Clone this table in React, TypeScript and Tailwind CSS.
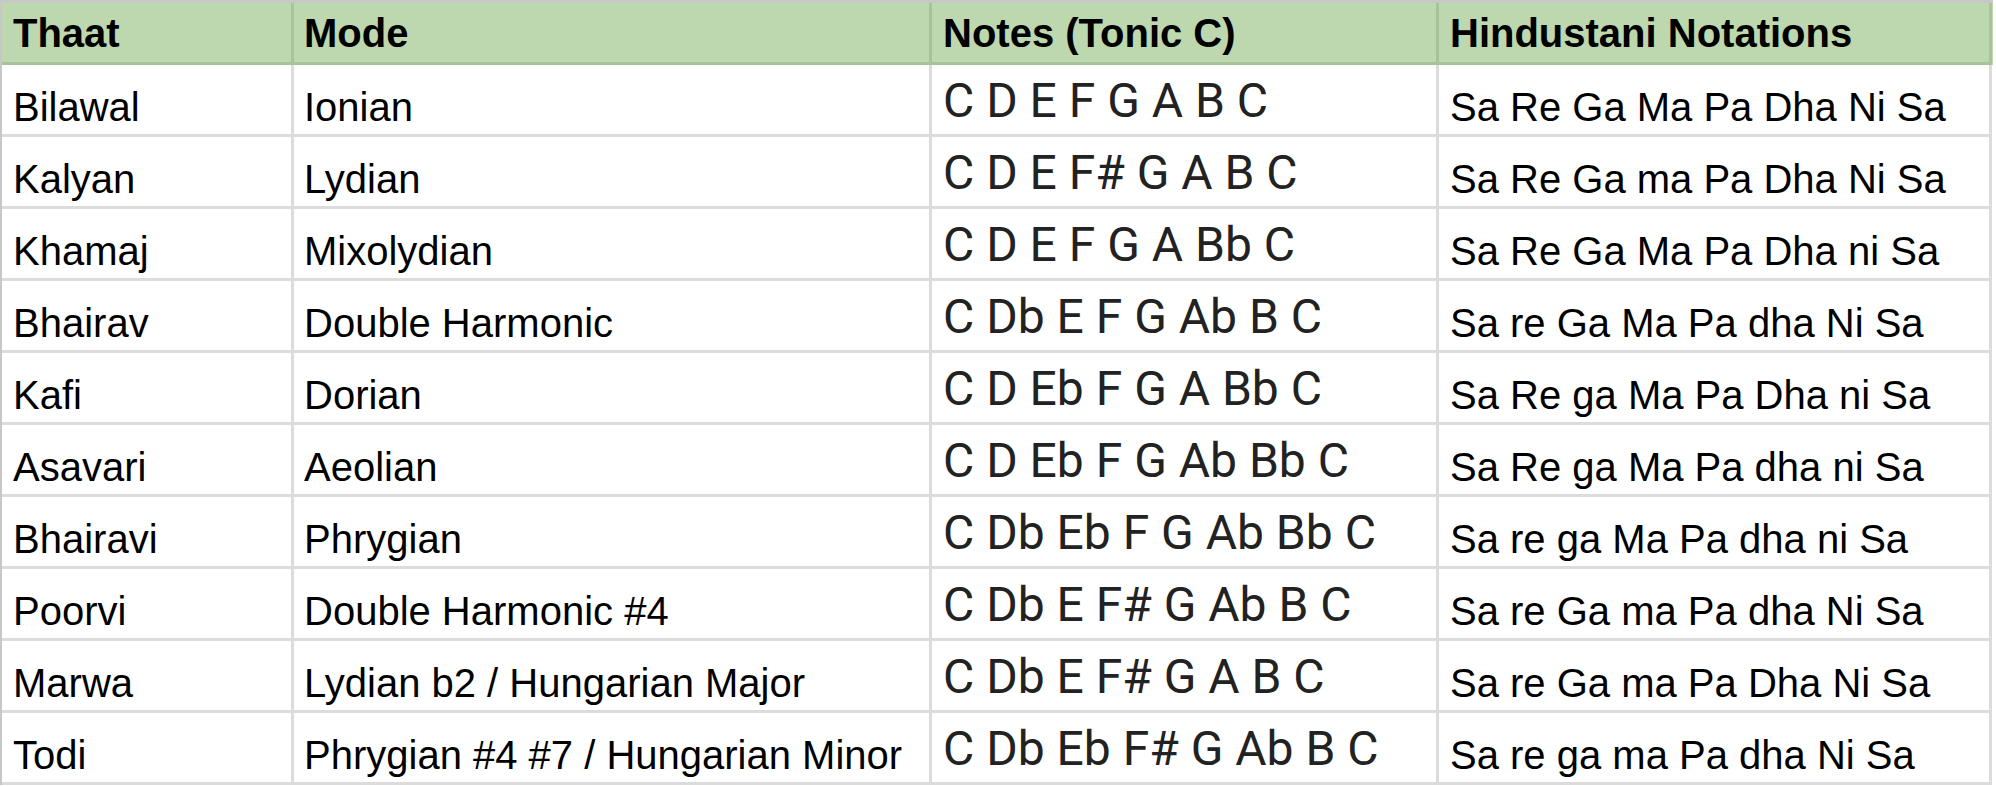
const rows = [
  ["Bilawal", "Ionian", "C D E F G A B C", "Sa Re Ga Ma Pa Dha Ni Sa"],
  ["Kalyan", "Lydian", "C D E F# G A B C", "Sa Re Ga ma Pa Dha Ni Sa"],
  ["Khamaj", "Mixolydian", "C D E F G A Bb C", "Sa Re Ga Ma Pa Dha ni Sa"],
  ["Bhairav", "Double Harmonic", "C Db E F G Ab B C", "Sa re Ga Ma Pa dha Ni Sa"],
  ["Kafi", "Dorian", "C D Eb F G A Bb C", "Sa Re ga Ma Pa Dha ni Sa"],
  ["Asavari", "Aeolian", "C D Eb F G Ab Bb C", "Sa Re ga Ma Pa dha ni Sa"],
  ["Bhairavi", "Phrygian", "C Db Eb F G Ab Bb C", "Sa re ga Ma Pa dha ni Sa"],
  ["Poorvi", "Double Harmonic #4", "C Db E F# G Ab B C", "Sa re Ga ma Pa dha Ni Sa"],
  ["Marwa", "Lydian b2 / Hungarian Major", "C Db E F# G A B C", "Sa re Ga ma Pa Dha Ni Sa"],
  ["Todi", "Phrygian #4 #7 / Hungarian Minor", "C Db Eb F# G Ab B C", "Sa re ga ma Pa dha Ni Sa"],
];

const headers = ["Thaat", "Mode", "Notes (Tonic C)", "Hindustani Notations"];

const gridCols = "grid grid-cols-[292px_638px_507px_553px]";

// left padding per column, a little uneven in the sheet
const padLeft = ["pl-[11px]", "pl-[10px]", "pl-[11px]", "pl-[11px]"];

export default function App() {
  return (
    <div className="min-h-screen bg-white">
      <div className="w-[1993px] border-l-[2px] border-t-[3px] border-[#c7c7c7] font-['Liberation_Sans',Arial,sans-serif] text-[40px] text-black">
        <div className={`${gridCols} h-[62px] bg-[#bdd7ae] font-bold`}>
          {headers.map((h, i) => (
            <div
              key={h}
              className={`flex items-end border-b-[3px] border-r-[3px] border-[#a8c39b] pb-[6px] ${padLeft[i]} leading-none`}
            >
              <span className="leading-[46px]">{h}</span>
            </div>
          ))}
        </div>

        {rows.map((row) => (
          <div key={row[0]} className={`${gridCols} h-[72px]`}>
            {row.map((cell, i) => (
              <div
                key={i}
                className={[
                  "flex items-end border-b-[3px] border-r-[3px] border-[#dcdcdc]",
                  padLeft[i],
                  i === 2
                    ? "pb-[6px] font-['Roboto',sans-serif] text-[48px] text-[#222222]"
                    : "pb-[4px]",
                ].join(" ")}
              >
                <span className={i === 2 ? "leading-[54px]" : "leading-[46px]"}>{cell}</span>
              </div>
            ))}
          </div>
        ))}
      </div>
    </div>
  );
}
